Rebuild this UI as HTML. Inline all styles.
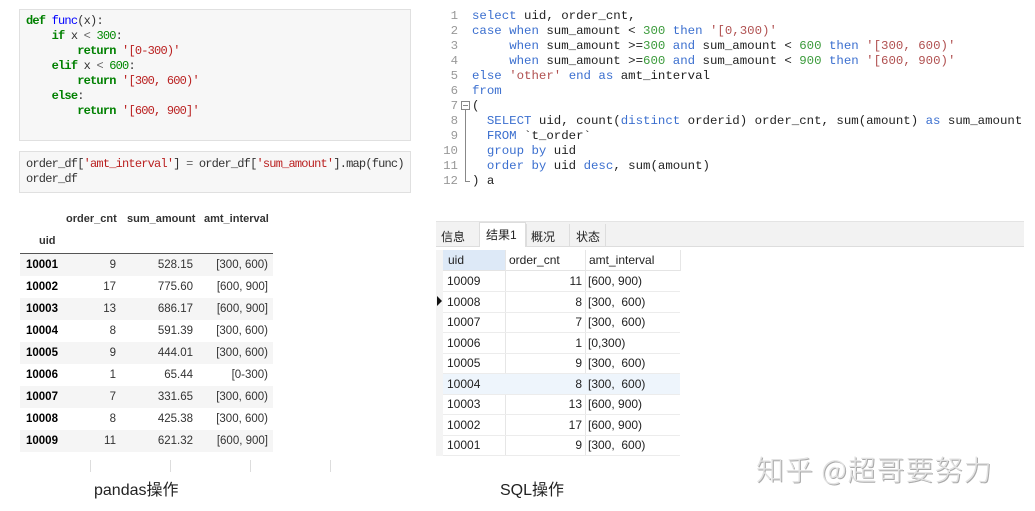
<!DOCTYPE html>
<html><head><meta charset="utf-8"><style>
*{margin:0;padding:0;box-sizing:border-box}
body{width:1035px;height:511px;background:#fff;position:relative;overflow:hidden;font-family:"Liberation Sans","Noto Sans CJK SC",sans-serif}
.a{position:absolute;white-space:pre}
.box{position:absolute;background:#f7f7f7;border:1px solid #e0e0e0}
.py{font-family:"Liberation Mono","Noto Sans CJK SC",monospace;font-size:12px;color:#333;line-height:15px;letter-spacing:-0.8px}
.k{color:#008000;font-weight:bold}.n{color:#080}.s{color:#ba2121}.o{color:#666}.f{color:#0000ff}
.sq{font-family:"Liberation Mono",monospace;font-size:12.4px;line-height:15px;color:#222}
.b{color:#3b6fcf}.g{color:#3a9a3a}.r{color:#b05050}.ln{color:#999}
.pt{font-size:11.5px;color:#333}
.pt div{position:absolute;height:22px;line-height:22px}
.gr{font-size:12px;color:#222}
</style></head><body>
<div class="box" style="left:19px;top:9px;width:392px;height:132px"></div>
<div class="a py" style="left:26px;top:14px"><span class="k">def</span> <span class="f">func</span>(x):
    <span class="k">if</span> x <span class="o">&lt;</span> <span class="n">300</span>:
        <span class="k">return</span> <span class="s">'[0-300)'</span>
    <span class="k">elif</span> x <span class="o">&lt;</span> <span class="n">600</span>:
        <span class="k">return</span> <span class="s">'[300, 600)'</span>
    <span class="k">else</span>:
        <span class="k">return</span> <span class="s">'[600, 900]'</span></div>
<div class="box" style="left:19px;top:151px;width:392px;height:42px"></div>
<div class="a py" style="left:26px;top:157px">order_df[<span class="s">'amt_interval'</span>] <span class="o">=</span> order_df[<span class="s">'sum_amount'</span>].map(func)
order_df</div>

<div class="pt">
<div class="a" style="left:66px;top:208px;font-weight:bold;font-size:11px">order_cnt</div>
<div class="a" style="left:127px;top:208px;font-weight:bold;font-size:11px">sum_amount</div>
<div class="a" style="left:204px;top:208px;font-weight:bold;font-size:11px">amt_interval</div>
<div class="a" style="left:39px;top:230px;font-weight:bold;font-size:11px">uid</div>
<div style="left:20px;top:253px;width:253px;height:1px;background:#555"></div>
<div style="left:20px;top:254px;width:253px;background:#f5f5f5"></div>
<div style="left:20px;top:298px;width:253px;background:#f5f5f5"></div>
<div style="left:20px;top:342px;width:253px;background:#f5f5f5"></div>
<div style="left:20px;top:386px;width:253px;background:#f5f5f5"></div>
<div style="left:20px;top:430px;width:253px;background:#f5f5f5"></div>
</div>
<div class="pt" id="pt"></div>
<script>
var d=[["10001","9","528.15","[300, 600)"],["10002","17","775.60","[600, 900]"],["10003","13","686.17","[600, 900]"],["10004","8","591.39","[300, 600)"],["10005","9","444.01","[300, 600)"],["10006","1","65.44","[0-300)"],["10007","7","331.65","[300, 600)"],["10008","8","425.38","[300, 600)"],["10009","11","621.32","[600, 900]"]];
var h="";d.forEach(function(r,i){var t=254+i*22;
h+='<div style="left:26px;top:'+t+'px;font-weight:bold;color:#000">'+r[0]+'</div>';
h+='<div style="left:60px;width:56px;text-align:right;top:'+t+'px">'+r[1]+'</div>';
h+='<div style="left:120px;width:73px;text-align:right;top:'+t+'px">'+r[2]+'</div>';
h+='<div style="left:196px;width:72px;text-align:right;top:'+t+'px">'+r[3]+'</div>';});
document.getElementById("pt").innerHTML=h;
</script>
<div class="a" style="left:90px;top:460px;width:1px;height:12px;background:#ddd"></div>
<div class="a" style="left:170px;top:460px;width:1px;height:12px;background:#ddd"></div>
<div class="a" style="left:250px;top:460px;width:1px;height:12px;background:#ddd"></div>
<div class="a" style="left:330px;top:460px;width:1px;height:12px;background:#ddd"></div>
<div class="a" style="left:94px;top:476px;font-size:16px;color:#222">pandas操作</div>

<div class="a sq ln" style="left:440px;top:9px;width:18px;text-align:right">1
2
3
4
5
6
7
8
9
10
11
12</div>
<div class="a" style="left:461px;top:101px;width:9px;height:9px;border:1px solid #888;background:#fff"></div>
<div class="a" style="left:463px;top:105px;width:5px;height:1px;background:#888"></div>
<div class="a" style="left:465px;top:110px;width:1px;height:72px;background:#888"></div>
<div class="a" style="left:465px;top:181px;width:5px;height:1px;background:#888"></div>
<div class="a sq" style="left:472px;top:9px"><span class="b">select</span> uid, order_cnt,
<span class="b">case when</span> sum_amount &lt; <span class="g">300</span> <span class="b">then</span> <span class="r">'[0,300)'</span>
     <span class="b">when</span> sum_amount &gt;=<span class="g">300</span> <span class="b">and</span> sum_amount &lt; <span class="g">600</span> <span class="b">then</span> <span class="r">'[300, 600)'</span>
     <span class="b">when</span> sum_amount &gt;=<span class="g">600</span> <span class="b">and</span> sum_amount &lt; <span class="g">900</span> <span class="b">then</span> <span class="r">'[600, 900)'</span>
<span class="b">else</span> <span class="r">'other'</span> <span class="b">end as</span> amt_interval
<span class="b">from</span>
(
  <span class="b">SELECT</span> uid, count(<span class="b">distinct</span> orderid) order_cnt, sum(amount) <span class="b">as</span> sum_amount
  <span class="b">FROM</span> `t_order`
  <span class="b">group by</span> uid
  <span class="b">order by</span> uid <span class="b">desc</span>, sum(amount)
) a</div>

<div class="a" style="left:436px;top:221px;width:588px;height:26px;background:#f2f2f2;border-top:1px solid #e4e4e4;border-bottom:1px solid #ddd"></div>
<div class="a" style="left:479px;top:222px;width:47px;height:25px;background:#fff;border:1px solid #ddd;border-bottom:none"></div>
<div class="a" style="left:526px;top:224px;width:44px;height:23px;border-right:1px solid #ddd;border-left:1px solid #ddd"></div>
<div class="a" style="left:570px;top:224px;width:36px;height:23px;border-right:1px solid #ddd"></div>
<div class="a gr" style="left:441px;top:228px">信息</div>
<div class="a gr" style="left:486px;top:226px">结果1</div>
<div class="a gr" style="left:531px;top:228px">概况</div>
<div class="a gr" style="left:576px;top:228px">状态</div>
<div class="gr" id="g"></div>
<script>
var s=[["10009","11","[600, 900)"],["10008","8","[300,  600)"],["10007","7","[300,  600)"],["10006","1","[0,300)"],["10005","9","[300,  600)"],["10004","8","[300,  600)"],["10003","13","[600, 900)"],["10002","17","[600, 900)"],["10001","9","[300,  600)"]];
var h='<div class="a" style="left:443px;top:250px;width:62px;height:21px;background:#dde9f7"></div>';
h+='<div class="a" style="left:443px;top:270px;width:237px;height:1px;background:#e4e4e4"></div>';
h+='<div class="a" style="left:505px;top:250px;width:1px;height:206px;background:#e6e6e6"></div>';
h+='<div class="a" style="left:585px;top:250px;width:1px;height:206px;background:#e6e6e6"></div>';
h+='<div class="a" style="left:680px;top:250px;width:1px;height:21px;background:#e6e6e6"></div>';
h+='<div class="a" style="left:436px;top:250px;width:7px;height:206px;background:#f4f4f4"></div>';
h+='<div class="a" style="left:448px;top:253px">uid</div><div class="a" style="left:509px;top:253px">order_cnt</div><div class="a" style="left:589px;top:253px">amt_interval</div>';
s.forEach(function(r,i){var t=271+i*20.5;
if(i==5)h+='<div class="a" style="left:443px;top:'+t+'px;width:237px;height:20px;background:#eef5fc"></div>';
h+='<div class="a" style="left:443px;top:'+(t+20)+'px;width:237px;height:1px;background:#ececec"></div>';
h+='<div class="a" style="left:447px;top:'+(t+3)+'px">'+r[0]+'</div>';
h+='<div class="a" style="left:505px;width:77px;text-align:right;top:'+(t+3)+'px">'+r[1]+'</div>';
h+='<div class="a" style="left:588px;top:'+(t+3)+'px">'+r[2]+'</div>';});
h+='<div class="a" style="left:437px;top:296px;width:0;height:0;border-left:5px solid #111;border-top:5px solid transparent;border-bottom:5px solid transparent"></div>';
document.getElementById("g").innerHTML=h;
</script>
<div class="a" style="left:500px;top:476px;font-size:16px;color:#222">SQL操作</div>
<div class="a" style="left:756px;top:449px;font-size:28px;color:#e2e2e2;text-shadow:1px 1px 0 #aaa;letter-spacing:1px;font-family:'Noto Sans CJK SC',sans-serif;font-weight:300">知乎 @超哥要努力</div>
</body></html>
